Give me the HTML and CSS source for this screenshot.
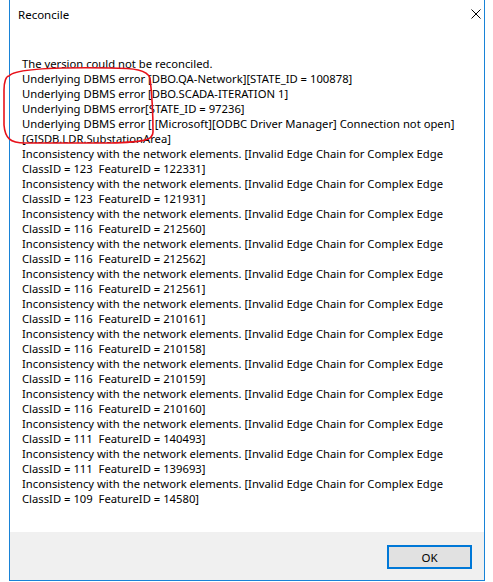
FILE: index.html
```html
<!DOCTYPE html>
<html>
<head>
<meta charset="utf-8">
<link rel="stylesheet" href="styles.css">
</head>
<body>
<div class="window">
  <div class="titlebar">
    <span class="title">Reconcile</span>
    <svg class="close" width="10" height="10" viewBox="0 0 10 10"><path d="M0.5 0.5 L9.5 9.5 M9.5 0.5 L0.5 9.5" stroke="#000" stroke-width="1" fill="none"/></svg>
  </div>
  <div class="content">
    <div class="messages">
<div class="line">The version could not be reconciled.</div>
<div class="line">Underlying DBMS error [DBO.QA-Network][STATE_ID = 100878]</div>
<div class="line">Underlying DBMS error [DBO.SCADA-ITERATION 1]</div>
<div class="line">Underlying DBMS error[STATE_ID = 97236]</div>
<div class="line">Underlying DBMS error [ [Microsoft][ODBC Driver Manager] Connection not open]</div>
<div class="line">[GISDB.LDR.SubstationArea]</div>
<div class="line">Inconsistency with the network elements. [Invalid Edge Chain for Complex Edge</div>
<div class="line">ClassID = 123  FeatureID = 122331]</div>
<div class="line">Inconsistency with the network elements. [Invalid Edge Chain for Complex Edge</div>
<div class="line">ClassID = 123  FeatureID = 121931]</div>
<div class="line">Inconsistency with the network elements. [Invalid Edge Chain for Complex Edge</div>
<div class="line">ClassID = 116  FeatureID = 212560]</div>
<div class="line">Inconsistency with the network elements. [Invalid Edge Chain for Complex Edge</div>
<div class="line">ClassID = 116  FeatureID = 212562]</div>
<div class="line">Inconsistency with the network elements. [Invalid Edge Chain for Complex Edge</div>
<div class="line">ClassID = 116  FeatureID = 212561]</div>
<div class="line">Inconsistency with the network elements. [Invalid Edge Chain for Complex Edge</div>
<div class="line">ClassID = 116  FeatureID = 210161]</div>
<div class="line">Inconsistency with the network elements. [Invalid Edge Chain for Complex Edge</div>
<div class="line">ClassID = 116  FeatureID = 210158]</div>
<div class="line">Inconsistency with the network elements. [Invalid Edge Chain for Complex Edge</div>
<div class="line">ClassID = 116  FeatureID = 210159]</div>
<div class="line">Inconsistency with the network elements. [Invalid Edge Chain for Complex Edge</div>
<div class="line">ClassID = 116  FeatureID = 210160]</div>
<div class="line">Inconsistency with the network elements. [Invalid Edge Chain for Complex Edge</div>
<div class="line">ClassID = 111  FeatureID = 140493]</div>
<div class="line">Inconsistency with the network elements. [Invalid Edge Chain for Complex Edge</div>
<div class="line">ClassID = 111  FeatureID = 139693]</div>
<div class="line">Inconsistency with the network elements. [Invalid Edge Chain for Complex Edge</div>
<div class="line">ClassID = 109  FeatureID = 14580]</div>
    </div>
  </div>
  <div class="footer">
    <button class="ok">OK</button>
  </div>
</div>
<svg class="annotation" width="160" height="150" viewBox="0 0 160 150"><path d="M9 76 C 14 70, 50 67, 110 68 C 135 68, 147 70, 150 78 C 152 95, 153 115, 153 132 C 153 140, 145 142, 110 143 L 25 143 C 10 143, 5 138, 4 125 L 4 90 C 4 82, 6 76, 9 76" fill="none" stroke="#e8111a" stroke-width="1.6" stroke-linecap="round"/></svg>
</body>
</html>
```
FILE: styles.css
```css
html, body {
  margin: 0;
  padding: 0;
  background: #ffffff;
}
body {
  position: relative;
  width: 493px;
  height: 582px;
  overflow: hidden;
  font-family: "Segoe UI", "Noto Sans", "Open Sans", sans-serif;
  color: #000;
}
.window {
  margin-left: 9px;
  width: 474px;
  height: 580px;
  border-left: 1px solid #1883d7;
  border-right: 1px solid #1883d7;
  border-bottom: 1px solid #1883d7;
  background: #fff;
  display: flex;
  flex-direction: column;
}
.titlebar {
  height: 30px;
  display: flex;
  align-items: center;
  justify-content: space-between;
  padding: 0 2px 0 8px;
}
.title {
  font-size: 11.5px;
  margin-top: -1px;
}
.close {
  margin-right: 1px;
  margin-top: -2px;
}
.content {
  flex: 1;
  padding: 26px 0 0 12px;
}
.line {
  font-size: 11.25px;
  line-height: 15px;
  white-space: pre;
}
.footer {
  height: 48px;
  background: #f0f0f0;
  display: flex;
  justify-content: flex-end;
  align-items: flex-start;
  padding: 13px 12px 0 0;
  box-sizing: border-box;
}
.ok {
  width: 85px;
  height: 24px;
  border: 2px solid #0078d7;
  background: #e1e1e1;
  font-family: inherit;
  font-size: 11.5px;
  color: #000;
  padding: 0;
  margin: 0;
}
.annotation {
  position: absolute;
  left: 0;
  top: 0;
}
```
